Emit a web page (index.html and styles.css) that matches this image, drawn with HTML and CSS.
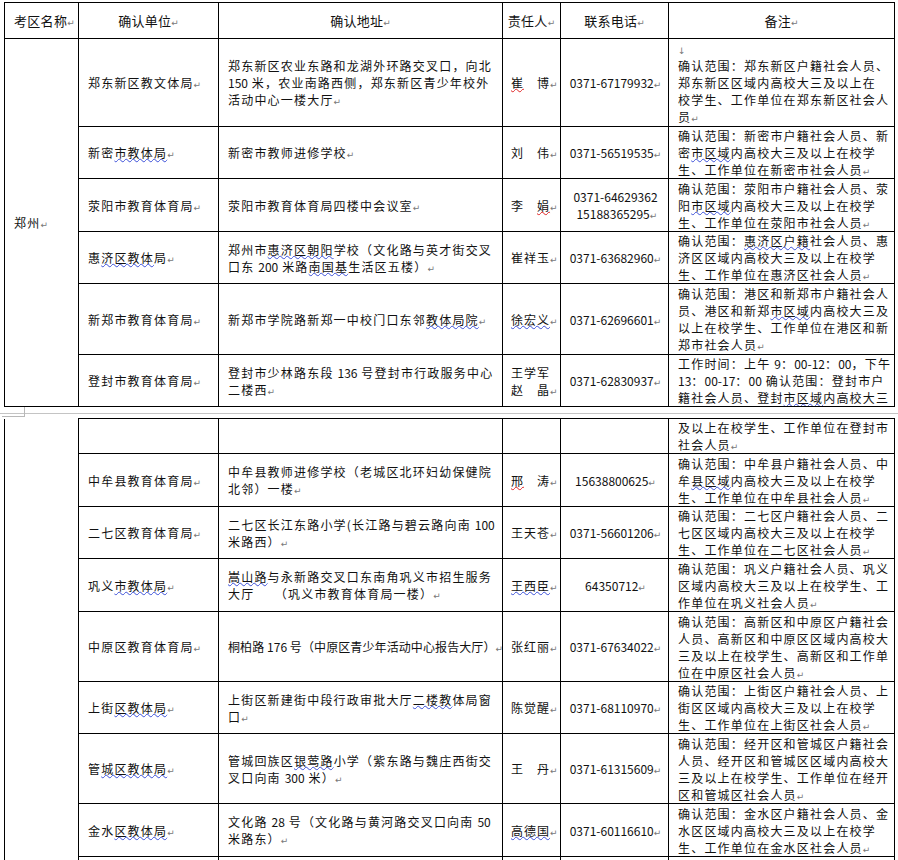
FILE: index.html
```html
<!DOCTYPE html>
<html lang="zh-CN">
<head>
<meta charset="utf-8">
<title>郑州考区确认点</title>
<link rel="stylesheet" href="styles.css">
</head>
<body>
<div class="doc">
<table class="tbl">
<colgroup><col class="w-area"><col class="w-unit"><col class="w-addr"><col class="w-person"><col class="w-phone"><col class="w-note"></colgroup>
<tr class="r36 hd">
<th class="c-area">考区名称<span class="pm">↵</span></th>
<th>确认单位<span class="pm">↵</span></th>
<th>确认地址<span class="pm">↵</span></th>
<th>责任人<span class="pm">↵</span></th>
<th>联系电话<span class="pm">↵</span></th>
<th>备注<span class="pm">↵</span></th>
</tr>
<tr class="r88">
<td class="c-area" rowspan="6">郑州<span class="pm">↵</span></td>
<td>郑东新区教文体局<span class="pm">↵</span></td>
<td>郑东新区农业东路和龙湖外环路交叉口，向北<br><span class="n">150</span> 米，农业南路西侧，郑东新区青少年校外<br>活动中心一楼大厅<span class="pm">↵</span></td>
<td class="c-person"><span class="wr">崔</span>　博<span class="pm">↵</span></td>
<td class="c-phone">0371-67179932<span class="pm">↵</span></td>
<td class="c-note"><span class="pm">↓</span><br>确认范围：郑东新区户籍社会人员、<br>郑东新区区域内高校大三及以上在<br>校学生、工作单位在郑东新区社会人<br>员<span class="pm">↵</span></td>
</tr>
<tr class="r52">
<td>新密<span class="wb">市教体局</span><span class="pm">↵</span></td>
<td>新密市教师进修学校<span class="pm">↵</span></td>
<td class="c-person">刘　伟<span class="pm">↵</span></td>
<td class="c-phone">0371-56519535<span class="pm">↵</span></td>
<td class="c-note">确认范围：新密市户籍社会人员、新<br>密<span class="wb">市区域</span>内高校大三及以上在校学<br>生、工作单位在新密市社会人员<span class="pm">↵</span></td>
</tr>
<tr class="r53">
<td>荥阳市教育体育局<span class="pm">↵</span></td>
<td>荥阳市教育体育局四楼中会议室<span class="pm">↵</span></td>
<td class="c-person">李　<span class="wr">娟</span><span class="pm">↵</span></td>
<td class="c-phone">0371-64629362<br>&nbsp;15188365295<span class="pm">↵</span></td>
<td class="c-note">确认范围：荥阳市户籍社会人员、荥<br>阳<span class="wb">市区域</span>内高校大三及以上在校学<br>生、工作单位在荥阳市社会人员<span class="pm">↵</span></td>
</tr>
<tr class="r52">
<td>惠<span class="wb">济区教体</span>局<span class="pm">↵</span></td>
<td>郑州市<span class="wb">惠济区朝阳</span>学校（文化路与英才街交叉<br>口东 <span class="n">200</span> 米路<span class="wb">南国基</span>生活区五楼）<span class="pm">↵</span></td>
<td class="c-person">崔祥玉<span class="pm">↵</span></td>
<td class="c-phone">0371-63682960<span class="pm">↵</span></td>
<td class="c-note">确认范围：<span class="wb">惠济区户籍</span>社会人员、惠<br>济区区域内高校大三及以上在校学<br>生、工作单位在惠济区社会人员<span class="pm">↵</span></td>
</tr>
<tr class="r71">
<td>新郑市教育体育局<span class="pm">↵</span></td>
<td>新郑市学院路新郑一中校门口东邻<span class="wb">教体局院</span><span class="pm">↵</span></td>
<td class="c-person"><span class="wb">徐宏义</span><span class="pm">↵</span></td>
<td class="c-phone">0371-62696601<span class="pm">↵</span></td>
<td class="c-note">确认范围：港区和新郑市户籍社会人<br>员、港区和新郑<span class="wb">市区域</span>内高校大三及<br>以上在校学生、工作单位在港区和新<br>郑市社会人员<span class="pm">↵</span></td>
</tr>
<tr class="r52">
<td>登封市教育体育局<span class="pm">↵</span></td>
<td>登封市少林路东段 <span class="n">136</span> 号登封市行政服务中心<br>二楼西<span class="pm">↵</span></td>
<td class="c-person">王学军<br>赵　晶<span class="pm">↵</span></td>
<td class="c-phone">0371-62830937<span class="pm">↵</span></td>
<td class="c-note">工作时间：上午 <span class="n">9</span>：<span class="n">00-12</span>：<span class="n">00</span>，下午<br><span class="n">13</span>：<span class="n">00-17</span>：<span class="n">00</span> 确认范围：登封市户<br>籍社会人员、登封<span class="wb">市区域</span>内高校大三</td>
</tr>
</table>

<div class="pagebreak"></div>

<table class="tbl tbl-cont">
<colgroup><col class="w-area"><col class="w-unit"><col class="w-addr"><col class="w-person"><col class="w-phone"><col class="w-note"></colgroup>
<tr class="r35">
<td class="c-area cont" rowspan="9"></td>
<td></td>
<td></td>
<td class="c-person"></td>
<td class="c-phone"></td>
<td class="c-note">及以上在校学生、工作单位在登封市<br>社会人员<span class="pm">↵</span></td>
</tr>
<tr class="r53">
<td>中牟县教育体育局<span class="pm">↵</span></td>
<td>中牟县教师进修学校（老城区北环妇幼保健院<br>北邻）一楼<span class="pm">↵</span></td>
<td class="c-person"><span class="wr">邢</span>　涛<span class="pm">↵</span></td>
<td class="c-phone">15638800625<span class="pm">↵</span></td>
<td class="c-note">确认范围：中牟县户籍社会人员、中<br>牟<span class="wb">县区域</span>内高校大三及以上在校学<br>生、工作单位在中牟县社会人员<span class="pm">↵</span></td>
</tr>
<tr class="r52">
<td>二七区教育体育局<span class="pm">↵</span></td>
<td>二七区长江东路小学(长江路与碧云路向南 <span class="n">100</span><br>米路西）<span class="pm">↵</span></td>
<td class="c-person">王天苍<span class="pm">↵</span></td>
<td class="c-phone">0371-56601206<span class="pm">↵</span></td>
<td class="c-note">确认范围：二七区户籍社会人员、二<br>七区区域内高校大三及以上在校学<br>生、工作单位在二七区社会人员<span class="pm">↵</span></td>
</tr>
<tr class="r53">
<td>巩义<span class="wb">市教体局</span><span class="pm">↵</span></td>
<td><span class="wb">嵩山路</span>与永新路交叉口东南角巩义市招生服务<br>大厅　　（巩义市教育体育局一楼）<span class="pm">↵</span></td>
<td class="c-person"><span class="wb">王西臣</span><span class="pm">↵</span></td>
<td class="c-phone">64350712<span class="pm">↵</span></td>
<td class="c-note">确认范围：巩义户籍社会人员、巩义<br>区域内高校大三及以上在校学生、工<br>作单位在巩义社会人员<span class="pm">↵</span></td>
</tr>
<tr class="r70">
<td>中原区教育体育局<span class="pm">↵</span></td>
<td class="tight">桐柏路 <span class="n">176</span> 号（中原区青少年活动中心报告大厅）<span class="pm">↵</span></td>
<td class="c-person">张红丽<span class="pm">↵</span></td>
<td class="c-phone">0371-67634022<span class="pm">↵</span></td>
<td class="c-note">确认范围：高新区和中原区户籍社会<br>人员、高新区和中原区区域内高校大<br>三及以上在校学生、高新区和工作单<br>位在中原区社会人员<span class="pm">↵</span></td>
</tr>
<tr class="r52">
<td>上街<span class="wb">区教体局</span><span class="pm">↵</span></td>
<td>上街区新建街中段行政审批大厅<span class="wb">二楼教</span>体局窗<br>口<span class="pm">↵</span></td>
<td class="c-person">陈觉醒<span class="pm">↵</span></td>
<td class="c-phone">0371-68110970<span class="pm">↵</span></td>
<td class="c-note">确认范围：上街区户籍社会人员、上<br>街区区域内高校大三及以上在校学<br>生、工作单位在上街区社会人员<span class="pm">↵</span></td>
</tr>
<tr class="r70">
<td>管<span class="wb">城区教体局</span><span class="pm">↵</span></td>
<td>管城回族区<span class="wb">银莺路</span>小学（紫东路与魏庄西街交<br>叉口向南 <span class="n">300</span> 米）<span class="pm">↵</span></td>
<td class="c-person">王　丹<span class="pm">↵</span></td>
<td class="c-phone">0371-61315609<span class="pm">↵</span></td>
<td class="c-note">确认范围：经开区和管城区户籍社会<br>人员、经开区和管城区区域内高校大<br>三及以上在校学生、工作单位在经开<br>区和管城区社会人员<span class="pm">↵</span></td>
</tr>
<tr class="r53">
<td>金水<span class="wb">区教体局</span><span class="pm">↵</span></td>
<td>文化路 <span class="n">28</span> 号（文化路与黄河路交叉口向南 <span class="n">50</span><br>米路东）<span class="pm">↵</span></td>
<td class="c-person"><span class="wb">高德国</span><span class="pm">↵</span></td>
<td class="c-phone">0371-60116610<span class="pm">↵</span></td>
<td class="c-note">确认范围：金水区户籍社会人员、金<br>水区区域内高校大三及以上在校学<br>生、工作单位在金水区社会人员<span class="pm">↵</span></td>
</tr>
<tr class="r40">
<td></td>
<td></td>
<td class="c-person"></td>
<td class="c-phone"></td>
<td class="c-note"></td>
</tr>
</table>
</div>
</body>
</html>
```

FILE: styles.css
```css
html, body {
  margin: 0;
  background: #fff;
}

body {
  color: #111;
  font-family: "Noto Sans CJK SC", "Liberation Sans", sans-serif;
  font-size: 12px;
}

.doc {
  padding: 2px 0 0 4px;
}

.tbl {
  border-collapse: collapse;
  table-layout: fixed;
  width: 890px;
}

.w-area { width: 74px; }
.w-unit { width: 140px; }
.w-addr { width: 284px; }
.w-person { width: 58px; }
.w-phone { width: 108px; }
.w-note { width: 226px; }

.tbl td,
.tbl th {
  border: 1px solid #000;
  padding: 0 0 0 9px;
  vertical-align: middle;
  line-height: 17px;
  letter-spacing: 1.2px;
  font-weight: normal;
  text-align: left;
  white-space: nowrap;
  overflow: hidden;
}

.tbl th {
  font-size: 13px;
  letter-spacing: 0.3px;
  text-align: center;
  padding: 0;
}

.tbl th.c-area {
  text-align: left;
  padding-left: 9px;
}

.tbl .c-person {
  padding-left: 8px;
  letter-spacing: 1px;
}

.tbl .c-phone {
  text-align: center;
  letter-spacing: 0;
  padding: 0 0 0 2px;
}

.tbl .tight {
  letter-spacing: 0.1px;
}

.tbl-cont .cont {
  border-top: none;
}

.r35 { height: 35px; }
.r36 { height: 36px; }
.r40 { height: 40px; }
.r52 { height: 52px; }
.r53 { height: 53px; }
.r70 { height: 70px; }
.r71 { height: 71px; }
.r88 { height: 88px; }

.n {
  letter-spacing: 0;
}

.pm {
  font-family: "DejaVu Sans", sans-serif;
  font-size: 9px;
  line-height: 0;
  color: #777;
  letter-spacing: 0;
}

.wb,
.wr {
  text-decoration-line: underline;
  text-decoration-style: wavy;
  text-decoration-thickness: 1px;
  text-underline-offset: 0;
  text-decoration-skip-ink: none;
}

.wb {
  text-decoration-color: #3b4fd8;
}

.wr {
  text-decoration-color: #e02424;
}

.pagebreak {
  position: relative;
  height: 11px;
}

.pagebreak::before {
  content: "";
  position: absolute;
  left: -4px;
  right: -10px;
  top: 6px;
  border-top: 1px solid #c4c4c4;
}

.pagebreak::after {
  content: "";
  position: absolute;
  left: -2px;
  top: 0;
  width: 22px;
  height: 9px;
  border-right: 1px solid #b8b8b8;
  border-bottom: 1px solid #b8b8b8;
}
```
